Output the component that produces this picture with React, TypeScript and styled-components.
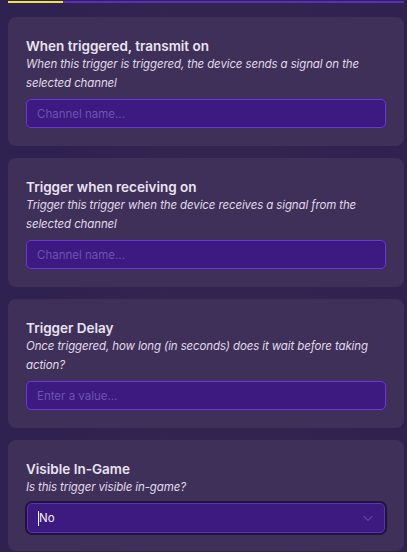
import React from "react";
import styled, { createGlobalStyle } from "styled-components";

const Global = createGlobalStyle`
  html, body {
    margin: 0;
    padding: 0;
    background: #30214f;
  }
  body {
    font-family: Inter, "Noto Sans", "Liberation Sans", sans-serif;
    -webkit-font-smoothing: antialiased;
  }
`;

const Page = styled.div`
  min-height: 552px;
  box-sizing: border-box;
  padding: 1px 3px 0 8px;
  background: linear-gradient(90deg, #2f2150 0%, #33244f 50%, #30214f 100%);
`;

const TabLine = styled.div`
  display: flex;
  height: 2px;
  margin-bottom: 14px;
`;

const TabSegment = styled.div<{ $active?: boolean; $width?: number }>`
  height: 2px;
  flex: ${(p) => (p.$width ? `0 0 ${p.$width}px` : "1")};
  background: ${(p) => (p.$active ? "#ece63a" : "#5a2fbf")};
`;

const List = styled.div`
  display: flex;
  flex-direction: column;
  gap: 12px;
`;

const Card = styled.section`
  background: #3f3059;
  border-radius: 8px;
  padding: 20px 18px 18px 18px;
`;

const Title = styled.h3`
  margin: 0;
  font-size: 13.5px;
  line-height: 18px;
  font-weight: 600;
  color: #e9e4f1;
`;

const Hint = styled.p`
  margin: 0 0 6px 0;
  font-size: 11.5px;
  line-height: 19px;
  font-style: italic;
  letter-spacing: -0.12px;
  color: #e0dae9;
`;

const Field = styled.input`
  display: block;
  box-sizing: border-box;
  width: 100%;
  height: 29px;
  padding: 0 10px;
  border: 1px solid #6c36de;
  border-radius: 5px;
  background: #3c1a7f;
  font-family: inherit;
  font-size: 11.5px;
  color: #fff;
  outline: none;
  &::placeholder {
    color: #6e52b3;
  }
`;

const Select = styled.div`
  box-sizing: border-box;
  display: flex;
  align-items: center;
  justify-content: space-between;
  height: 30px;
  margin: 0 1px;
  padding: 0 10px 0 10px;
  border: 1px solid #5a31c0;
  border-radius: 5px;
  background: #3c1a7f;
  box-shadow: 0 0 0 2px #201634;
  font-size: 11.5px;
  color: #f2eefa;
`;

const Value = styled.span`
  display: flex;
  align-items: center;
`;

const Caret = styled.span`
  display: inline-block;
  width: 1px;
  height: 15px;
  background: #f2eefa;
`;

const Chevron = () => (
  <svg width="12" height="12" viewBox="0 0 12 12" fill="none">
    <path d="M1.5 4 L6 8.5 L10.5 4" stroke="#7b5ac6" strokeWidth="1" />
  </svg>
);

const fields = [
  {
    title: "When triggered, transmit on",
    hint: "When this trigger is triggered, the device sends a signal on the selected channel",
    placeholder: "Channel name...",
  },
  {
    title: "Trigger when receiving on",
    hint: "Trigger this trigger when the device receives a signal from the selected channel",
    placeholder: "Channel name...",
  },
  {
    title: "Trigger Delay",
    hint: "Once triggered, how long (in seconds) does it wait before taking action?",
    placeholder: "Enter a value...",
  },
];

export default function App() {
  return (
    <>
      <Global />
      <Page>
        <TabLine>
          <TabSegment $active $width={55} />
          <TabSegment />
        </TabLine>
        <List>
          {fields.map((f) => (
            <Card key={f.title}>
              <Title>{f.title}</Title>
              <Hint>{f.hint}</Hint>
              <Field placeholder={f.placeholder} />
            </Card>
          ))}
          <Card>
            <Title>Visible In-Game</Title>
            <Hint>Is this trigger visible in-game?</Hint>
            <Select>
              <Value>
                <Caret />
                No
              </Value>
              <Chevron />
            </Select>
          </Card>
        </List>
      </Page>
    </>
  );
}
